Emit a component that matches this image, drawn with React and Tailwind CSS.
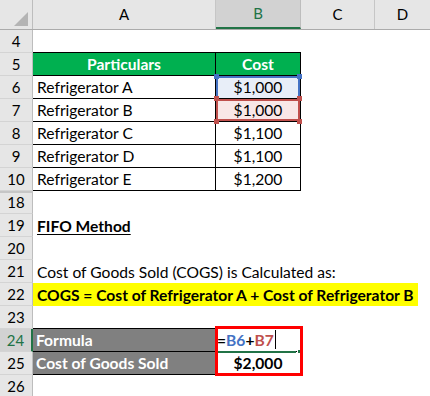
import React from "react";

const rows = [
  { n: 4 },
  { n: 5, head: true },
  { n: 6, name: "Refrigerator A", cost: "$1,000", mark: "blue" },
  { n: 7, name: "Refrigerator B", cost: "$1,000", mark: "red" },
  { n: 8, name: "Refrigerator C", cost: "$1,100" },
  { n: 9, name: "Refrigerator D", cost: "$1,100" },
  { n: 10, name: "Refrigerator E", cost: "$1,200" },
];

function RowHead({ n, active, hiddenAbove }) {
  return (
    <div
      className={`w-[33px] shrink-0 h-full flex items-end justify-center pb-[1px] text-[15px] leading-[20px] border-b border-b-[#d4d4d4] ${
        active
          ? "bg-[#d2d2d2] text-[#217346] border-r-2 border-r-[#217346]"
          : "bg-[#e6e6e6] text-black border-r border-r-[#bdbdbd]"
      } ${hiddenAbove ? "border-t-2 border-t-[#c6c6c6]" : ""}`}
    >
      {n}
    </div>
  );
}

function Handle({ color, pos }) {
  return <span className={`absolute w-[5px] h-[5px] ${color} ${pos}`} />;
}

function CostCell({ value, mark }) {
  if (mark === "blue") {
    return (
      <div className="relative w-[85px] h-full border-r border-b border-black bg-[#e8eef8] flex items-end justify-center leading-[20px] pb-[1px]">
        <span className="absolute inset-0 border-2 border-[#4472c4] border-b-0" />
        <Handle color="bg-[#4472c4]" pos="-left-[2px] -top-[2px]" />
        <Handle color="bg-[#4472c4]" pos="-right-[2px] -top-[2px]" />
        <span className="relative">{value}</span>
      </div>
    );
  }
  if (mark === "red") {
    return (
      <div className="relative w-[85px] h-full border-r border-b border-black bg-[#f9e7e7] flex items-end justify-center leading-[20px] pb-[1px]">
        <span className="absolute inset-0 border-2 border-[#c0504d]" />
        <Handle color="bg-[#c0504d]" pos="-left-[2px] -top-[3px]" />
        <Handle color="bg-[#c0504d]" pos="-right-[2px] -top-[3px]" />
        <Handle color="bg-[#c0504d]" pos="-left-[2px] -bottom-[3px]" />
        <Handle color="bg-[#c0504d]" pos="-right-[2px] -bottom-[3px]" />
        <span className="relative">{value}</span>
      </div>
    );
  }
  return (
    <div className="w-[85px] h-full border-r border-b border-black flex items-end justify-center leading-[20px] pb-[1px]">
      {value}
    </div>
  );
}

export default function App() {
  return (
    <div className="relative w-[430px] h-[396px] overflow-hidden bg-white text-black text-[15.6px] font-['Lato',sans-serif]">
      {/* column header */}
      <div className="flex h-[30px] bg-[#e6e6e6] border-b border-b-[#ababab] text-[15px]">
        <div className="w-[33px] shrink-0 border-r border-r-[#bdbdbd] flex items-end justify-end pr-[4px] pb-[3px]">
          <svg width="14" height="14" viewBox="0 0 14 14">
            <polygon points="14,0 14,14 0,14" fill="#b4b4b4" />
          </svg>
        </div>
        <div className="w-[183px] border-r border-r-[#c6c6c6] flex items-center justify-center">A</div>
        <div className="w-[85px] bg-[#d2d2d2] border-r border-r-[#bdbdbd] border-b-2 border-b-[#217346] flex items-center justify-center text-[#217346]">
          B
        </div>
        <div className="w-[74px] border-r border-r-[#c6c6c6] flex items-center justify-center">C</div>
        <div className="flex-1 flex items-center justify-center">D</div>
      </div>

      {/* table */}
      {rows.map((r) => (
        <div key={r.n} className="flex h-[23px]">
          <RowHead n={r.n} />
          {r.n === 4 ? (
            <>
              <div className="w-[183px] h-full border-b border-black" />
              <div className="w-[85px] h-full border-b border-black" />
            </>
          ) : r.head ? (
            <>
              <div className="w-[183px] h-full bg-[#00b050] border-r border-b border-black flex items-end justify-center pb-[1px] leading-[20px] font-bold text-white">
                Particulars
              </div>
              <div className="w-[85px] h-full bg-[#00b050] border-r border-b border-black flex items-end justify-center pb-[1px] leading-[20px] font-bold text-white">
                Cost
              </div>
            </>
          ) : (
            <>
              <div className="w-[183px] h-full border-r border-b border-black flex items-end pl-[4px] pb-[1px] leading-[20px]">
                {r.name}
              </div>
              <CostCell value={r.cost} mark={r.mark} />
            </>
          )}
        </div>
      ))}

      <div className="flex h-[23px]">
        <RowHead n={18} hiddenAbove />
      </div>
      <div className="flex h-[23px]">
        <RowHead n={19} />
        <div className="flex items-end pl-[4px] pb-[1px] leading-[20px] font-bold underline underline-offset-2">FIFO Method</div>
      </div>
      <div className="flex h-[23px]">
        <RowHead n={20} />
      </div>
      <div className="flex h-[23px]">
        <RowHead n={21} />
        <div className="flex items-end pl-[4px] pb-[1px] leading-[20px] whitespace-nowrap">Cost of Goods Sold (COGS) is Calculated as:</div>
      </div>
      <div className="flex h-[23px]">
        <RowHead n={22} />
        <div className="w-[385px] h-full bg-[#ffff00] flex items-end pl-[4px] pb-[1px] leading-[20px] font-bold whitespace-nowrap">
          COGS = Cost of Refrigerator A + Cost of Refrigerator B
        </div>
      </div>
      <div className="flex h-[23px]">
        <RowHead n={23} />
        <div className="w-[183px] h-full border-b border-black" />
        <div className="w-[85px] h-full border-b border-black" />
      </div>
      <div className="flex h-[23px]">
        <RowHead n={24} active />
        <div className="w-[183px] h-full bg-[#808080] border-r border-b border-black flex items-end pl-[3px] pb-[1px] leading-[20px] font-bold text-white">
          Formula
        </div>
        <div className="relative w-[85px] h-full border-r border-b border-black flex items-end pl-[1px] pb-[1px] leading-[20px] font-bold">
          <span>=</span>
          <span className="text-[#4472c4]">B6</span>
          <span>+</span>
          <span className="text-[#c0504d]">B7</span>
          <span className="ml-[1px] mb-[1px] w-[1px] h-[19px] bg-black" />
          <span className="absolute left-[1px] right-[4px] -bottom-[2px] h-[2px] bg-[#217346]" />
          <span className="absolute -right-[2px] -bottom-[3px] w-[5px] h-[5px] bg-[#217346] border border-white" />
        </div>
      </div>
      <div className="flex h-[23px]">
        <RowHead n={25} />
        <div className="w-[183px] h-full bg-[#808080] border-r border-b border-black flex items-end pl-[3px] pb-[1px] leading-[20px] font-bold text-white">
          Cost of Goods Sold
        </div>
        <div className="w-[85px] h-full border-r border-b border-black flex items-end justify-center pb-[1px] leading-[20px] font-bold">
          $2,000
        </div>
      </div>
      <div className="flex h-[23px]">
        <RowHead n={26} />
      </div>

      {/* red annotation box */}
      <div className="absolute left-[215px] top-[326px] w-[88px] h-[50px] border-[3px] border-[#ff0000]" />
    </div>
  );
}
